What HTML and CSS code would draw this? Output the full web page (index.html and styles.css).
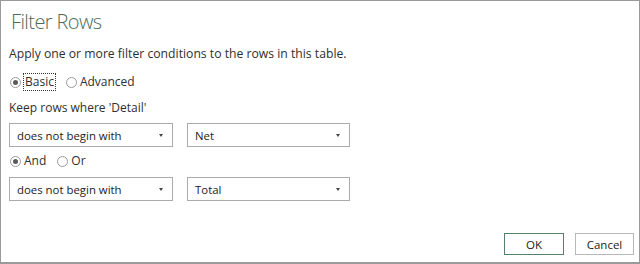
FILE: index.html
```html
<!DOCTYPE html>
<html>
<head>
<meta charset="utf-8">
<link rel="stylesheet" href="styles.css">
</head>
<body>
<div class="dialog">
  <h1 class="title">Filter Rows</h1>
  <p class="desc">Apply one or more filter conditions to the rows in this table.</p>
  <div class="radios mode">
    <label class="radio"><span class="dot on"></span><span class="focus">Basic</span></label>
    <label class="radio"><span class="dot"></span><span>Advanced</span></label>
  </div>
  <p class="keep">Keep rows where 'Detail'</p>
  <div class="row first">
    <div class="select op"><span>does not begin with</span><span class="arrow"></span></div>
    <div class="select val"><span>Net</span><span class="arrow"></span></div>
  </div>
  <div class="radios logic">
    <label class="radio"><span class="dot on"></span><span>And</span></label>
    <label class="radio"><span class="dot"></span><span>Or</span></label>
  </div>
  <div class="row second">
    <div class="select op"><span>does not begin with</span><span class="arrow"></span></div>
    <div class="select val"><span>Total</span><span class="arrow"></span></div>
  </div>
  <div class="buttons">
    <button class="btn ok">OK</button>
    <button class="btn">Cancel</button>
  </div>
</div>
</body>
</html>
```
FILE: styles.css
```css
html, body {
  margin: 0;
  padding: 0;
  background: #fff;
}
body {
  font-family: "Open Sans", "Noto Sans", sans-serif;
  color: #333;
}
.dialog {
  box-sizing: border-box;
  width: 640px;
  height: 264px;
  border: 1px solid #9a9a9a;
  border-bottom-width: 2px;
  padding: 0 5px 0 8px;
  display: flex;
  flex-direction: column;
}
.title {
  margin: 7px 0 0 2px;
  font-size: 20px;
  font-weight: 300;
  line-height: 28px;
  letter-spacing: -0.6px;
  color: #4e6b58;
}
.desc {
  margin: 9px 0 0 0;
  font-size: 12.2px;
  line-height: 18px;
  color: #2f2f2f;
}
.radios {
  display: flex;
  gap: 10px;
  font-size: 12px;
  line-height: 16px;
  color: #2f2f2f;
}
.mode { margin-top: 11px; }
.logic { margin-top: 6px; }
.radio {
  display: flex;
  align-items: center;
  gap: 3px;
}
.dot {
  width: 11px;
  height: 11px;
  border: 1px solid #9a9a9a;
  border-radius: 50%;
  box-sizing: border-box;
  margin-left: 1px;
  position: relative;
  background: #fff;
}
.dot.on::after {
  content: "";
  position: absolute;
  left: 2px;
  top: 2px;
  width: 5px;
  height: 5px;
  border-radius: 50%;
  background: #5a5a5a;
}
.focus {
  outline: 1px dotted #333;
  outline-offset: 0;
  padding: 0 1px;
}
.keep {
  margin: 10px 0 0 0;
  font-size: 12px;
  line-height: 16px;
  color: #2f2f2f;
}
.row {
  display: flex;
  gap: 14px;
}
.row.first { margin-top: 7px; }
.row.second { margin-top: 8px; }
.select {
  box-sizing: border-box;
  height: 24px;
  border: 1px solid #ababab;
  display: flex;
  align-items: center;
  justify-content: space-between;
  padding: 0 9px 0 7px;
  font-size: 11.4px;
  color: #222;
}
.op { width: 164px; }
.val { width: 163px; }
.arrow {
  width: 0;
  height: 0;
  border-left: 2.5px solid transparent;
  border-right: 2.5px solid transparent;
  border-top: 3px solid #444;
}
.buttons {
  margin-top: auto;
  margin-bottom: 7px;
  display: flex;
  justify-content: flex-end;
  gap: 11px;
}
.btn {
  box-sizing: border-box;
  height: 22px;
  width: 59px;
  background: #fff;
  border: 1px solid #b8b8b8;
  font-family: "Open Sans", "Noto Sans", sans-serif;
  font-size: 11.5px;
  color: #222;
  padding: 0;
}
.btn.ok {
  width: 60px;
  border-color: #55806a;
}
```
